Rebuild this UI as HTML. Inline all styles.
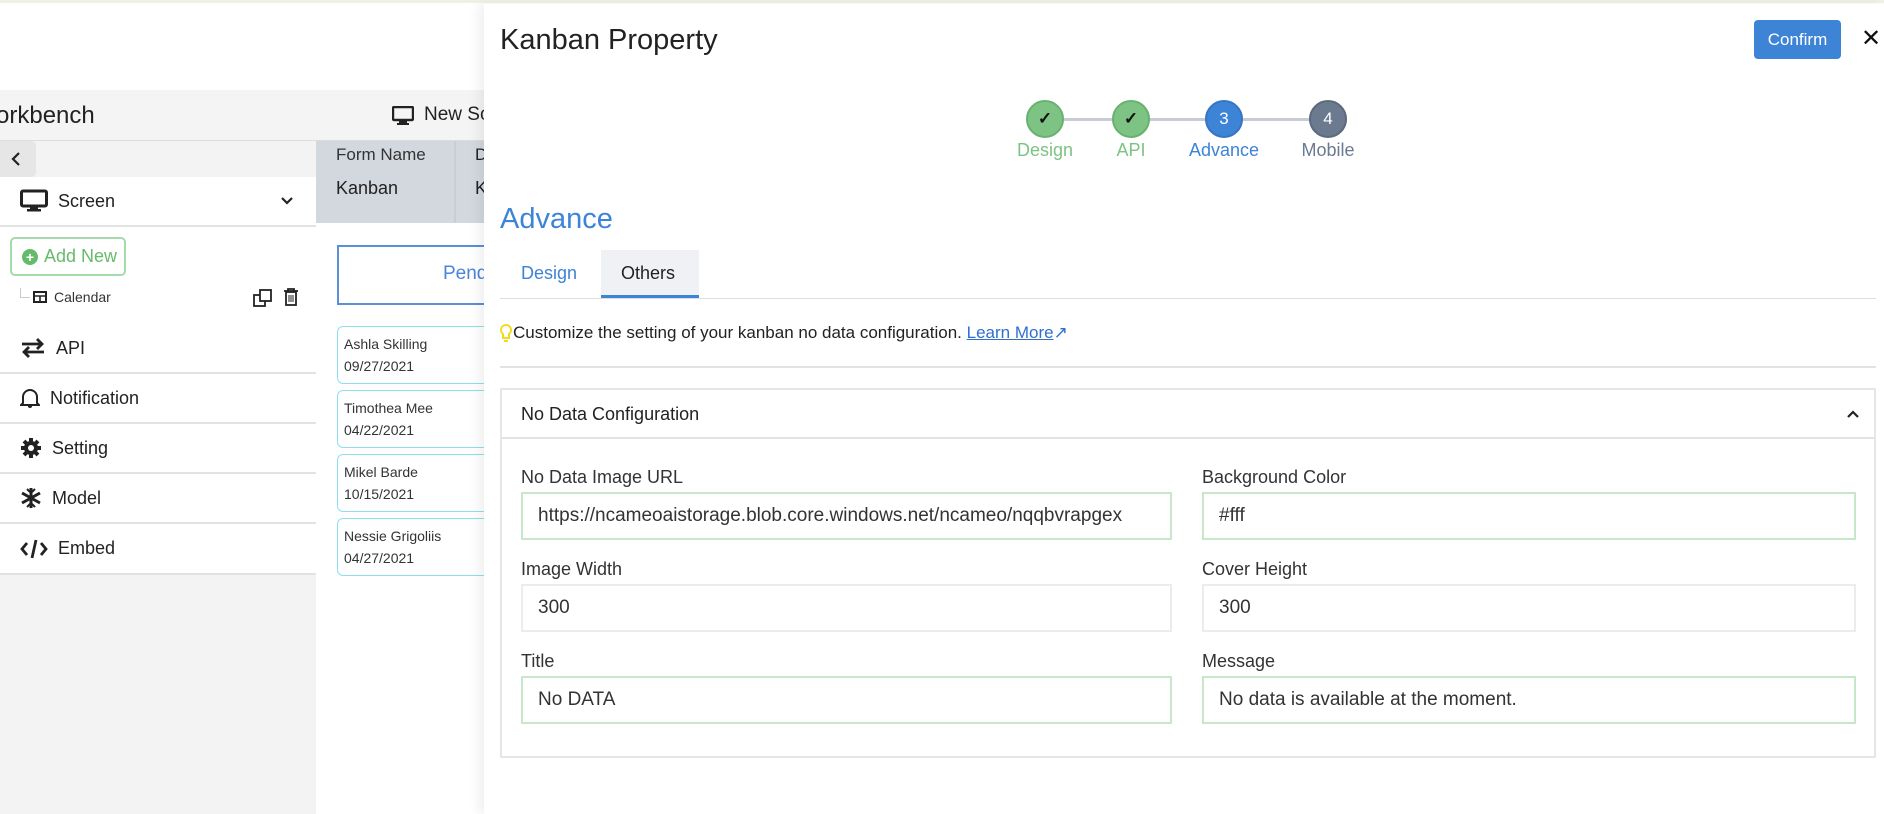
<!DOCTYPE html>
<html><head><meta charset="utf-8"><style>
*{box-sizing:border-box;margin:0;padding:0}
body{width:1884px;height:814px;position:relative;overflow:hidden;background:#fff;font-family:"Liberation Sans",sans-serif;color:#222}
.a{position:absolute}
.topline{left:0;top:0;width:1884px;height:3px;background:#f0f0e4}
.hdr{left:0;top:90px;width:484px;height:51px;background:#f4f4f4;border-bottom:1px solid #ddd;overflow:hidden}
.side{left:0;top:141px;width:316px;height:673px;background:#f3f3f3}
.row{position:absolute;left:0;width:316px;background:#fff;border-bottom:2px solid #e2e2e2;font-size:18px;color:#222;display:flex;align-items:center}
.row svg{margin-left:20px;margin-right:10px}
.tblh{left:316px;top:141px;width:168px;height:82px;background:#d3d8df}
.card{position:absolute;left:337px;width:160px;height:58px;border:1px solid #8de0f0;border-right:none;border-radius:6px 0 0 6px;font-size:14px;color:#333;padding:6px 0 0 6px;line-height:22px}
.panel{left:484px;top:4px;width:1400px;height:810px;background:#fff;box-shadow:-6px 0 10px rgba(0,0,0,.06)}
.step{position:absolute;width:38px;height:38px;border-radius:50%;top:96px;color:#fff;font-size:17px;display:flex;align-items:center;justify-content:center;border:2px solid #ccc}
.sl{position:absolute;top:136px;font-size:18px;transform:translateX(-50%)}
.lbl{position:absolute;font-size:18px;color:#333}
.inp{position:absolute;height:48px;border:2px solid #c8e6c9;font-size:19px;color:#333;padding-left:15px;display:flex;align-items:center;white-space:nowrap;overflow:hidden}
.inp.g{border-color:#ececec}
</style></head><body>
<div class="a topline"></div>
<div class="a hdr"><div class="a" style="left:-4px;top:12px;font-size:24px;color:#222">orkbench</div>
<svg class="a" style="left:392px;top:16px" width="22" height="20" viewBox="0 0 22 20"><rect x="1" y="1" width="20" height="13" rx="1" fill="none" stroke="#222" stroke-width="2.4"/><rect x="7" y="15" width="8" height="3" fill="#222"/><rect x="5" y="17" width="12" height="2" fill="#222"/></svg>
<div class="a" style="left:424px;top:14px;font-size:19px;white-space:nowrap">New Sc</div></div>
<div class="a side"></div>
<div class="a" style="left:0;top:141px;width:36px;height:36px;background:#e6e6e6;border-radius:0 5px 5px 0"><svg style="margin:10px 0 0 11px" width="10" height="16" viewBox="0 0 10 16"><path d="M8 2L2 8l6 6" fill="none" stroke="#222" stroke-width="2.2"/></svg></div>
<div class="row" style="top:177px;height:50px"><svg width="28" height="24" viewBox="0 0 28 24"><rect x="1.5" y="2" width="25" height="15" rx="1.5" fill="none" stroke="#222" stroke-width="3"/><rect x="10" y="18" width="8" height="3" fill="#222"/><rect x="7" y="20" width="14" height="2.5" fill="#222"/></svg><span>Screen</span><svg style="position:absolute;left:280px;margin:0" width="14" height="10" viewBox="0 0 14 10"><path d="M2 2l5 5 5-5" fill="none" stroke="#222" stroke-width="2.2"/></svg></div>
<div class="a" style="left:0;top:227px;width:316px;height:97px;background:#fff"></div>
<div class="a" style="left:10px;top:237px;width:116px;height:39px;border:2px solid #a5dba8;border-radius:5px;color:#66bb6a;font-size:18px;display:flex;align-items:center;padding-left:10px"><span style="display:inline-block;width:16px;height:16px;border-radius:50%;background:#66bb6a;color:#fff;font-size:14px;line-height:16px;text-align:center;margin-right:6px;font-weight:bold">+</span>Add New</div>
<div class="a" style="left:20px;top:288px;width:10px;height:10px;border-left:1px solid #ccc;border-bottom:1px solid #ccc"></div>
<svg class="a" style="left:33px;top:291px" width="14" height="12" viewBox="0 0 14 12"><rect x="1" y="1" width="12" height="10" fill="none" stroke="#222" stroke-width="2"/><path d="M1 5h12M7 5v6" stroke="#222" stroke-width="1.6"/></svg>
<div class="a" style="left:54px;top:289px;font-size:14px;color:#333">Calendar</div>
<svg class="a" style="left:253px;top:288px" width="20" height="20" viewBox="0 0 20 20"><rect x="1" y="7" width="11" height="11" fill="none" stroke="#222" stroke-width="1.8"/><rect x="7" y="2" width="11" height="11" fill="#fff" stroke="#222" stroke-width="1.8"/></svg>
<svg class="a" style="left:283px;top:287px" width="16" height="20" viewBox="0 0 16 20"><path d="M1 4h14M5 4V2h6v2" fill="none" stroke="#222" stroke-width="1.8"/><rect x="3" y="5" width="10" height="13" fill="none" stroke="#222" stroke-width="1.8"/><path d="M6 8v7M8 8v7M10 8v7" stroke="#222" stroke-width="1"/></svg>
<div class="row" style="top:324px;height:50px"><svg width="26" height="22" viewBox="0 0 26 22"><path d="M2 7h20M17 2l5 5-5 5M24 15H4M9 10l-5 5 5 5" fill="none" stroke="#222" stroke-width="2.8"/></svg><span>API</span></div>
<div class="row" style="top:374px;height:50px"><svg width="20" height="22" viewBox="0 0 20 22"><path d="M3 16V10a7 7 0 0114 0v6l2 2H1z" fill="none" stroke="#222" stroke-width="2"/><path d="M8 19a2 2 0 004 0" fill="#222"/></svg><span>Notification</span></div>
<div class="row" style="top:424px;height:50px"><svg width="22" height="22" viewBox="0 0 22 22"><circle cx="11" cy="11" r="7" fill="#222"/><path d="M11 1v20M1 11h20M4 4l14 14M18 4L4 18" stroke="#222" stroke-width="4"/><circle cx="11" cy="11" r="3" fill="#fff"/></svg><span>Setting</span></div>
<div class="row" style="top:474px;height:50px"><svg width="22" height="22" viewBox="0 0 22 22"><path d="M11 1v20M2 6l18 10M2 16l18-10" stroke="#222" stroke-width="3"/><path d="M7 2l4 4 4-4M7 20l4-4 4 4" fill="none" stroke="#222" stroke-width="2"/></svg><span>Model</span></div>
<div class="row" style="top:524px;height:51px"><svg width="28" height="22" viewBox="0 0 28 22"><path d="M7 5l-5 6 5 6M21 5l5 6-5 6M16 2l-4 18" fill="none" stroke="#222" stroke-width="2.8"/></svg><span>Embed</span></div>
<div class="a tblh"><div class="a" style="left:20px;top:4px;font-size:17px;color:#333">Form Name</div><div class="a" style="left:20px;top:37px;font-size:18px;color:#222">Kanban</div><div class="a" style="left:138px;top:0;width:2px;height:82px;background:#c9ced6"></div><div class="a" style="left:159px;top:4px;font-size:17px">D</div><div class="a" style="left:159px;top:37px;font-size:18px">K</div></div>
<div class="a" style="left:337px;top:245px;width:160px;height:60px;border:2px solid #5b8fd9;border-right:none"><div class="a" style="left:104px;top:16px;font-size:19px;color:#4a86d8">Pend</div></div>
<div class="card" style="top:326px">Ashla Skilling<br>09/27/2021</div>
<div class="card" style="top:390px">Timothea Mee<br>04/22/2021</div>
<div class="card" style="top:454px">Mikel Barde<br>10/15/2021</div>
<div class="card" style="top:518px">Nessie Grigoliis<br>04/27/2021</div>

<div class="a panel">
<div class="a" style="left:16px;top:20px;font-size:29px;color:#222">Kanban Property</div>
<div class="a" style="left:1270px;top:16px;width:87px;height:39px;background:#3d83d6;border-radius:4px;color:#fff;font-size:17px;display:flex;align-items:center;justify-content:center">Confirm</div>
<div class="a" style="left:1377px;top:20px;font-size:24px;color:#111">✕</div>
<div class="a" style="left:561px;top:114px;width:284px;height:3px;background:#c8ccd2"></div>
<div class="step" style="left:542px;background:#7dc383;border-color:#6ab170;color:#111;font-weight:bold">✓</div>
<div class="step" style="left:628px;background:#7dc383;border-color:#6ab170;color:#111;font-weight:bold">✓</div>
<div class="step" style="left:721px;background:#3d83d6;border-color:#3576c4">3</div>
<div class="step" style="left:825px;background:#6c7a90;border-color:#5d697c">4</div>
<div class="sl" style="left:561px;color:#7dc383">Design</div>
<div class="sl" style="left:647px;color:#7dc383">API</div>
<div class="sl" style="left:740px;color:#3d83d6">Advance</div>
<div class="sl" style="left:844px;color:#6c7a90">Mobile</div>
<div class="a" style="left:16px;top:199px;font-size:29px;color:#3d83d6">Advance</div>
<div class="a" style="left:117px;top:246px;width:98px;height:48px;background:#eff1f4;border-bottom:3px solid #3d83d6"></div>
<div class="a" style="left:37px;top:259px;font-size:18px;color:#3d83d6">Design</div>
<div class="a" style="left:137px;top:259px;font-size:18px;color:#222">Others</div>
<div class="a" style="left:16px;top:294px;width:1376px;height:1px;background:#ddd"></div>
<svg class="a" style="left:16px;top:320px" width="12" height="20" viewBox="0 0 12 20"><path d="M6 1a5 5 0 00-3 9v4h6v-4a5 5 0 00-3-9z" fill="none" stroke="#f2dc1a" stroke-width="2"/><path d="M4 17h4" stroke="#f2dc1a" stroke-width="2"/></svg>
<div class="a" style="left:29px;top:319px;font-size:17px;color:#222">Customize the setting of your kanban no data configuration. <span style="color:#2f6fd0;text-decoration:underline">Learn More</span><span style="color:#2f6fd0">↗</span></div>
<div class="a" style="left:16px;top:362px;width:1376px;height:2px;background:#e2e2e2"></div>
<div class="a" style="left:16px;top:384px;width:1376px;height:370px;border:2px solid #e6e6e6">
<div class="a" style="left:0;top:0;width:1372px;height:49px;border-bottom:2px solid #e2e2e2"></div>
<div class="a" style="left:19px;top:14px;font-size:18px;color:#222">No Data Configuration</div>
<svg class="a" style="left:1344px;top:19px" width="14" height="10" viewBox="0 0 14 10"><path d="M2 8l5-5 5 5" fill="none" stroke="#222" stroke-width="2.2"/></svg>
<div class="lbl" style="left:19px;top:77px">No Data Image URL</div>
<div class="inp" style="left:19px;top:102px;width:651px">https://ncameoaistorage.blob.core.windows.net/ncameo/nqqbvrapgex</div>
<div class="lbl" style="left:700px;top:77px">Background Color</div>
<div class="inp" style="left:700px;top:102px;width:654px">#fff</div>
<div class="lbl" style="left:19px;top:169px">Image Width</div>
<div class="inp g" style="left:19px;top:194px;width:651px">300</div>
<div class="lbl" style="left:700px;top:169px">Cover Height</div>
<div class="inp g" style="left:700px;top:194px;width:654px">300</div>
<div class="lbl" style="left:19px;top:261px">Title</div>
<div class="inp" style="left:19px;top:286px;width:651px">No DATA</div>
<div class="lbl" style="left:700px;top:261px">Message</div>
<div class="inp" style="left:700px;top:286px;width:654px">No data is available at the moment.</div>
</div>
</div>
</body></html>
